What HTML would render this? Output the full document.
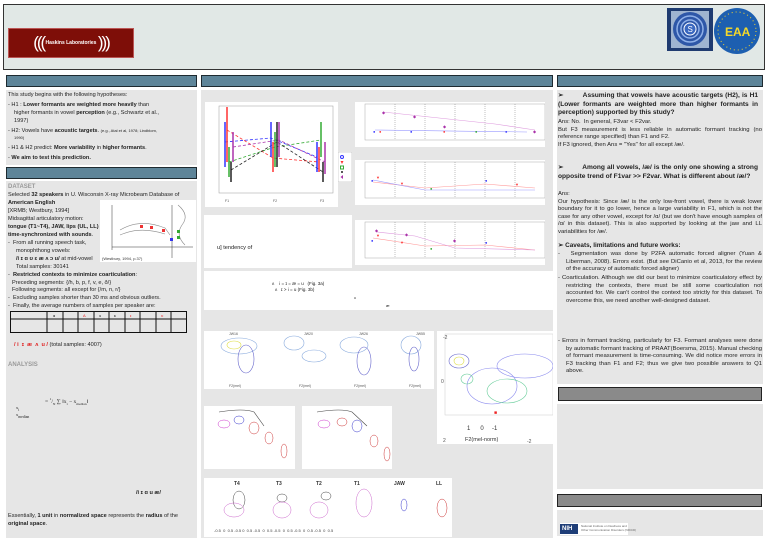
<!DOCTYPE html>
<html><head><meta charset="utf-8"><style>
*{margin:0;padding:0;box-sizing:border-box}
body{width:768px;height:541px;background:#fff;position:relative;overflow:hidden;font-family:"Liberation Sans",sans-serif;color:#222}
.a{position:absolute}
.bar{position:absolute;background:#5e8599;border:1.5px solid #1e2a30}
.gbar{position:absolute;background:#8a8a8a;border:1.5px solid #222}
.gray{position:absolute;background:#e6e6e6}
.w{position:absolute;background:#fff}
.t{position:absolute;font-size:5.6px;line-height:8px;white-space:nowrap}
b{font-weight:bold}
.r{color:#e02020}
.rt{position:absolute;font-family:"Liberation Sans",sans-serif;font-size:6.3px;line-height:8.3px;text-align:justify;width:200px}
.rs{font-size:5.9px;line-height:7.5px;width:204px}
</style></head><body>
<div class="a" style="left:3px;top:4px;width:762px;height:66px;background:#e1e8e6;border:1.5px solid #333"></div>
<div class="a" style="left:8px;top:28px;width:126px;height:30px;background:#7e0e08;border:1px solid #b55;color:#fff;font-size:5px;font-weight:bold;display:flex;align-items:center;justify-content:center">
<span style="font-size:17px;font-weight:normal;letter-spacing:-2px">(((</span>&nbsp;Haskins Laboratories&nbsp;<span style="font-size:17px;font-weight:normal;letter-spacing:-2px">)))</span></div>
<svg class="a" style="left:667px;top:8px" width="46" height="43"><rect width="46" height="43" fill="#1f3b70"/><rect x="4" y="3" width="38" height="37" fill="#9fb4d0"/><circle cx="23" cy="21" r="17" fill="#2e57a8"/><circle cx="23" cy="21" r="13" fill="none" stroke="#8fb0e8" stroke-width="1.5"/><circle cx="23" cy="21" r="9" fill="none" stroke="#8fb0e8" stroke-width="1.5"/><circle cx="23" cy="21" r="6" fill="#3a68c0" stroke="#fff" stroke-width="1"/><text x="20.5" y="24" font-size="8" fill="#fff" font-family="Liberation Sans">S</text></svg>
<svg class="a" style="left:713px;top:7px" width="48" height="48"><circle cx="24" cy="24" r="23" fill="#1d5fb0"/><circle cx="24" cy="24" r="19" fill="none" stroke="#f0d030" stroke-width="1" stroke-dasharray="1 3"/><text x="12" y="29" font-size="12" font-weight="bold" fill="#f4d82a" font-family="Liberation Sans">EAA</text></svg>

<div class="bar" style="left:6px;top:75px;width:191px;height:12px"></div>
<div class="bar" style="left:201px;top:75px;width:352px;height:12px"></div>
<div class="bar" style="left:557px;top:75px;width:206px;height:12px"></div>

<div class="gray" style="left:6px;top:90px;width:191px;height:75px"></div>
<div class="t" style="left:8px;top:91px">This study begins with the following hypotheses:</div>
<div class="t" style="left:8px;top:101px">- H1 : <b>Lower formants are weighted more heavily</b> than</div>
<div class="t" style="left:14px;top:109px">higher formants in vowel <b>perception</b> (e.g., Schwartz et al.,</div>
<div class="t" style="left:14px;top:117px">1997)</div>
<div class="t" style="left:8px;top:127px">- H2: Vowels have <b>acoustic targets</b>. <span style="font-size:4px">(e.g., Atal et al, 1978; Lindblom,</span></div>
<div class="t" style="left:14px;top:134px;font-size:4px">1990)</div>
<div class="t" style="left:8px;top:144px">- H1 &amp; H2 predict: <b>More variability</b> in <b>higher formants</b>.</div>
<div class="t" style="left:8px;top:154px">- <b>We aim to test this prediction.</b></div>
<div class="bar" style="left:6px;top:167px;width:191px;height:12px"></div>
<div class="gray" style="left:6px;top:181px;width:191px;height:357px"></div>
<div class="t" style="left:8px;top:183px;color:#999;font-weight:bold;font-size:6px">DATASET</div>
<div class="t" style="left:8px;top:191px">Selected <b>32 speakers</b> in U. Wisconsin X-ray Microbeam Database of</div>
<div class="t" style="left:8px;top:199px"><b>American English</b></div>
<div class="t" style="left:8px;top:207px">[XRMB; Westbury, 1994]</div>
<div class="t" style="left:8px;top:215px">Midsagittal articulatory motion:</div>
<div class="t" style="left:8px;top:223px"><b>tongue (T1~T4), JAW, lips (UL, LL)</b></div>
<div class="t" style="left:8px;top:231px"><b>time-synchronized with sounds</b>.</div>
<div class="t" style="left:8px;top:239px">-&nbsp; From all running speech task,</div>
<div class="t" style="left:16px;top:247px">monophthong vowels:</div>
<div class="t" style="left:16px;top:255px"><b>/i ɪ ɑ ʊ ɛ æ ʌ ɔ u/</b> at mid-vowel</div>
<div class="t" style="left:16px;top:263px">Total samples: 30141</div>
<div class="t" style="left:8px;top:271px">-&nbsp; <b>Restricted contexts to minimize coarticulation</b>:</div>
<div class="t" style="left:12px;top:279px">Preceding segments: {/h, b, p, f, v, e, ð/}</div>
<div class="t" style="left:12px;top:286px">Following segments: all except for {/m, n, r/}</div>
<div class="t" style="left:8px;top:294px">-&nbsp; Excluding samples shorter than 30 ms and obvious outliers.</div>
<div class="t" style="left:8px;top:302px">-&nbsp; Finally, the average numbers of samples per speaker are:</div>
<svg class="a" style="left:100px;top:200px" width="96" height="62"><rect width="96" height="62" fill="#fff"/><line x1="12" y1="47" x2="93" y2="47" stroke="#333" stroke-width=".5"/><line x1="12" y1="5" x2="12" y2="50" stroke="#333" stroke-width=".5"/><line x1="72" y1="5" x2="72" y2="58" stroke="#333" stroke-width=".5"/><path d="M20 30 Q40 18 65 28 L70 35" fill="none" stroke="#888" stroke-width=".6"/><path d="M20 35 Q40 26 65 34" fill="none" stroke="#888" stroke-width=".6"/><path d="M78 5 Q90 15 82 25 Q75 35 85 45" fill="none" stroke="#888" stroke-width=".6"/><rect x="40" y="25" width="3" height="3" fill="#e33"/><rect x="50" y="26" width="3" height="3" fill="#e33"/><rect x="62" y="29" width="3" height="3" fill="#e33"/><rect x="77" y="30" width="3" height="3" fill="#3a3"/><rect x="77" y="36" width="3" height="3" fill="#3a3"/><rect x="70" y="38" width="3" height="3" fill="#33e"/><text x="2" y="60" font-size="4" fill="#333">(Westbury, 1994, p.37)</text></svg>
<svg class="a" style="left:10px;top:311px" width="177" height="22"><g fill="none" stroke="#111" stroke-width="1"><rect x=".5" y=".5" width="176" height="21"/><line x1=".5" y1="8" x2="176" y2="8"/><line x1="37" y1="0" x2="37" y2="22"/><line x1="53" y1="0" x2="53" y2="22"/><line x1="68" y1="0" x2="68" y2="22"/><line x1="84" y1="0" x2="84" y2="22"/><line x1="99" y1="0" x2="99" y2="22"/><line x1="115" y1="0" x2="115" y2="22"/><line x1="130" y1="0" x2="130" y2="22"/><line x1="146" y1="0" x2="146" y2="22"/><line x1="161" y1="0" x2="161" y2="22"/></g><g font-size="4" font-family="Liberation Sans"><text x="43" y="6">ɑ</text><text x="73" y="6" fill="#e22">A</text><text x="89" y="6">ɔ</text><text x="104" y="6">ɛ</text><text x="120" y="6" fill="#e22">ɪ</text><text x="151" y="6" fill="#e22">ʊ</text></g></svg>
<div class="t" style="left:14px;top:341px"><span class="r" style="font-weight:bold">/ i &nbsp;ɪ &nbsp;æ &nbsp;ʌ &nbsp;u /</span> (total samples: 4007)</div>
<div class="t" style="left:8px;top:361px;color:#999;font-weight:bold;font-size:6px">ANALYSIS</div>
<div class="t" style="left:45px;top:395px;font-family:'Liberation Serif',serif">= <sup style="font-size:3.5px">1</sup>/<sub style="font-size:3.5px">N</sub> ∑ ‖x<sub style="font-size:3.5px">i</sub> − x<sub style="font-size:3.5px">median</sub>‖</div>
<div class="t" style="left:16px;top:404px;font-family:'Liberation Serif',serif;font-size:4.5px">x<sub>i</sub></div>
<div class="t" style="left:16px;top:411px;font-family:'Liberation Serif',serif;font-size:4.5px">x<sub>median</sub></div>
<div class="t" style="left:136px;top:489px;font-weight:bold">/i ɪ ɑ u æ/</div>
<div class="t" style="left:8px;top:512px">Essentially, <b>1 unit</b> in <b>normalized space</b> represents the <b>radius</b> of the</div>
<div class="t" style="left:8px;top:520px"><b>original space</b>.</div>

<div class="gray" style="left:201px;top:90px;width:352px;height:448px"></div>
<svg class="a" style="left:205px;top:102px" width="133" height="105"><rect width="133" height="105" fill="#fff"/><rect x="14" y="4" width="114" height="87" fill="none" stroke="#999" stroke-width=".5"/><g font-size="3.5" fill="#555"><text x="20" y="100">F1</text><text x="68" y="100">F2</text><text x="115" y="100">F3</text></g>
<g stroke-dasharray="3 2" stroke-width=".8" fill="none"><path d="M20 40 L66 36 L112 55" stroke="#33f"/><path d="M22 28 L68 56 L114 60" stroke="#f33"/><path d="M24 60 L70 45 L116 38" stroke="#3a3"/><path d="M26 68 L72 40 L118 70" stroke="#222"/><path d="M28 45 L74 38 L120 60" stroke="#a3a"/></g>
<g stroke-width="1.5"><line x1="20" y1="20" x2="20" y2="65" stroke="#33f"/><line x1="22" y1="5" x2="22" y2="60" stroke="#f33"/><line x1="24" y1="45" x2="24" y2="75" stroke="#3a3"/><line x1="26" y1="60" x2="26" y2="80" stroke="#222"/><line x1="28" y1="30" x2="28" y2="60" stroke="#a3a"/><line x1="66" y1="20" x2="66" y2="55" stroke="#33f"/><line x1="68" y1="40" x2="68" y2="70" stroke="#f33"/><line x1="70" y1="30" x2="70" y2="65" stroke="#3a3"/><line x1="72" y1="20" x2="72" y2="65" stroke="#222"/><line x1="74" y1="20" x2="74" y2="55" stroke="#a3a"/><line x1="112" y1="40" x2="112" y2="70" stroke="#33f"/><line x1="114" y1="45" x2="114" y2="70" stroke="#f33"/><line x1="116" y1="20" x2="116" y2="55" stroke="#3a3"/><line x1="118" y1="60" x2="118" y2="80" stroke="#222"/><line x1="120" y1="40" x2="120" y2="72" stroke="#a3a"/></g></svg>
<svg class="a" style="left:338px;top:152px" width="14" height="30"><rect width="14" height="30" fill="#fff" stroke="#aaa" stroke-width=".5"/><circle cx="4" cy="5" r="1.5" fill="none" stroke="#33f"/><path d="M2.5 9 L5.5 9 L4 12Z" fill="#f33"/><rect x="2.5" y="14" width="3" height="3" fill="none" stroke="#3a3"/><circle cx="4" cy="20" r="1" fill="#222"/><path d="M5 23 L2.5 25 L5 27Z" fill="#a3a"/></svg>
<svg class="a" style="left:355px;top:102px" width="190" height="165">
<g id="p"><rect width="190" height="45" fill="#fff"/><rect x="10" y="2" width="180" height="36" fill="none" stroke="#aaa" stroke-width=".5"/><g stroke="#666" stroke-width=".4" stroke-dasharray="1 1"><line x1="40" y1="2" x2="40" y2="38"/><line x1="70" y1="2" x2="70" y2="38"/><line x1="100" y1="2" x2="100" y2="38"/><line x1="130" y1="2" x2="130" y2="38"/><line x1="160" y1="2" x2="160" y2="38"/></g></g>
<g fill="none" stroke-width=".6"><path d="M20 28 L172 30" stroke="#99f"/><path d="M28 10 L140 22 L180 28" stroke="#d9d"/></g>
<g font-size="4"><text x="18" y="31" fill="#33f">●</text><text x="24" y="31" fill="#f33">●</text><text x="27" y="12" fill="#a3a">◆</text><text x="55" y="31" fill="#33f">●</text><text x="58" y="16" fill="#a3a">◆</text><text x="88" y="31" fill="#f33">●</text><text x="88" y="26" fill="#a3a">◆</text><text x="120" y="31" fill="#3a3">●</text><text x="150" y="31" fill="#33f">●</text><text x="178" y="31" fill="#a3a">◆</text></g>
<g transform="translate(0,58)"><use href="#p"/><path d="M18 22 L70 28 L130 24 L180 28" fill="none" stroke="#f99" stroke-width=".6"/><path d="M18 20 L70 30 L180 30" fill="none" stroke="#99f" stroke-width=".6"/><g font-size="4"><text x="16" y="22" fill="#33f">●</text><text x="21" y="19" fill="#f33">▼</text><text x="45" y="25" fill="#f33">▼</text><text x="75" y="30" fill="#3a3">●</text><text x="130" y="22" fill="#33f">●</text><text x="160" y="26" fill="#f33">▼</text></g></g>
<g transform="translate(0,118)"><use href="#p"/><path d="M18 18 L70 26 L130 25 L180 30" fill="none" stroke="#f99" stroke-width=".6"/><path d="M22 12 L60 16 L100 28 L180 30" fill="none" stroke="#d9d" stroke-width=".6"/><g font-size="4"><text x="16" y="22" fill="#33f">●</text><text x="21" y="17" fill="#f33">▼</text><text x="20" y="12" fill="#a3a">◆</text><text x="50" y="16" fill="#a3a">◆</text><text x="45" y="24" fill="#f33">▼</text><text x="75" y="30" fill="#3a3">●</text><text x="98" y="22" fill="#a3a">◆</text><text x="130" y="24" fill="#33f">●</text></g></g>
</svg>
<div class="w" style="left:204px;top:215px;width:148px;height:53px"></div>
<div class="t" style="left:217px;top:244px">u] tendency of</div>
<div class="w" style="left:204px;top:271px;width:349px;height:39px"></div>
<div class="t" style="left:272px;top:280px;font-size:4.5px">ʌ &nbsp;&nbsp; i = ɪ = æ = u &nbsp;&nbsp;(Fig. 3a)</div>
<div class="t" style="left:275px;top:286px;font-size:4.5px">ʌ &nbsp; ɪ &gt; i = u (Fig. 3b)</div>
<div class="t" style="left:354px;top:294px;font-size:4px">ʌ</div>
<div class="t" style="left:386px;top:302px;font-size:4px">æ</div>
<svg class="a" style="left:204px;top:331px" width="230" height="58"><rect width="230" height="58" fill="#fff"/>
<g fill="none" stroke-width=".6"><ellipse cx="35" cy="15" rx="18" ry="8" stroke="#8ad"/><ellipse cx="30" cy="14" rx="7" ry="4" stroke="#dd4"/><ellipse cx="42" cy="28" rx="8" ry="14" stroke="#66c"/><ellipse cx="90" cy="12" rx="10" ry="7" stroke="#8ad"/><ellipse cx="110" cy="25" rx="12" ry="6" stroke="#8ad"/><ellipse cx="150" cy="14" rx="14" ry="8" stroke="#8ad"/><ellipse cx="160" cy="30" rx="7" ry="14" stroke="#66c"/><ellipse cx="207" cy="14" rx="10" ry="9" stroke="#8ad"/><ellipse cx="210" cy="28" rx="5" ry="12" stroke="#66c"/></g>
<g font-size="3.5" fill="#555"><text x="25" y="4">JW16</text><text x="100" y="4">JW20</text><text x="155" y="4">JW26</text><text x="212" y="4">JW55</text><text x="25" y="56">F2(mel)</text><text x="95" y="56">F2(mel)</text><text x="150" y="56">F2(mel)</text><text x="205" y="56">F2(mel)</text></g></svg>
<svg class="a" style="left:437px;top:331px" width="116" height="113"><rect width="116" height="113" fill="#fff"/><rect x="8" y="3" width="108" height="81" fill="none" stroke="#ccc" stroke-width=".5"/>
<g fill="none" stroke-width=".6"><ellipse cx="22" cy="30" rx="10" ry="7" stroke="#66c"/><ellipse cx="22" cy="30" rx="5" ry="4" stroke="#dd4"/><ellipse cx="88" cy="35" rx="28" ry="12" stroke="#88e"/><ellipse cx="55" cy="55" rx="25" ry="18" stroke="#88e"/><ellipse cx="70" cy="60" rx="20" ry="12" stroke="#6c9"/><ellipse cx="30" cy="48" rx="6" ry="5" stroke="#6c9"/></g>
<g font-size="5"><text x="6" y="8" fill="#555">-2</text><text x="4" y="52" fill="#555">0</text><text x="6" y="111" fill="#555">2</text><text x="90" y="112" fill="#555">-2</text><text x="57" y="83" fill="#e22">■</text></g>
<text x="30" y="99" font-size="6" fill="#333">1 &nbsp;&nbsp;&nbsp;&nbsp;&nbsp;0 &nbsp;&nbsp;&nbsp;&nbsp;-1</text><text x="28" y="110" font-size="5.5" fill="#333">F2(mel-norm)</text></svg>
<svg class="a" style="left:204px;top:406px" width="91" height="63"><rect width="91" height="63" fill="#fff"/><path d="M15 6 Q40 2 50 6 L60 20" fill="none" stroke="#444" stroke-width=".6"/><g fill="none" stroke-width=".5"><ellipse cx="20" cy="18" rx="6" ry="4" stroke="#c3c"/><ellipse cx="35" cy="14" rx="5" ry="4" stroke="#33c"/><ellipse cx="50" cy="22" rx="5" ry="6" stroke="#c33"/><ellipse cx="65" cy="32" rx="4" ry="6" stroke="#c33"/><ellipse cx="80" cy="45" rx="3" ry="7" stroke="#c33"/></g></svg>
<svg class="a" style="left:302px;top:406px" width="90" height="63"><rect width="90" height="63" fill="#fff"/><path d="M15 6 Q40 2 50 6 L65 20" fill="none" stroke="#444" stroke-width=".6"/><g fill="none" stroke-width=".5"><ellipse cx="22" cy="18" rx="6" ry="4" stroke="#c3c"/><ellipse cx="40" cy="16" rx="5" ry="4" stroke="#c33"/><ellipse cx="55" cy="20" rx="5" ry="6" stroke="#33c"/><ellipse cx="72" cy="35" rx="4" ry="6" stroke="#c33"/><ellipse cx="85" cy="48" rx="3" ry="7" stroke="#c33"/></g></svg>
<svg class="a" style="left:204px;top:478px" width="248" height="59"><rect width="248" height="59" fill="#fff"/>
<g font-size="5" font-weight="bold" fill="#333"><text x="30" y="7">T4</text><text x="72" y="7">T3</text><text x="112" y="7">T2</text><text x="150" y="7">T1</text><text x="190" y="7">JAW</text><text x="232" y="7">LL</text></g>
<g fill="none" stroke-width=".5"><ellipse cx="35" cy="22" rx="6" ry="9" stroke="#444"/><ellipse cx="30" cy="32" rx="10" ry="7" stroke="#c6c"/><ellipse cx="78" cy="20" rx="5" ry="4" stroke="#444"/><ellipse cx="78" cy="32" rx="9" ry="8" stroke="#c6c"/><ellipse cx="122" cy="18" rx="5" ry="4" stroke="#444"/><ellipse cx="115" cy="32" rx="9" ry="8" stroke="#c6c"/><ellipse cx="160" cy="25" rx="8" ry="14" stroke="#c6c"/><ellipse cx="200" cy="27" rx="3" ry="6" stroke="#33c"/><ellipse cx="238" cy="30" rx="5" ry="9" stroke="#c33"/></g>
<g font-size="4" fill="#444"><text x="10" y="54">-0.5 &nbsp;0 &nbsp;0.5 -0.5 0 &nbsp;0.5 -0.5 &nbsp;0 &nbsp;0.5 -0.5 &nbsp;0 &nbsp;0.5 -0.5 &nbsp;0 &nbsp;0.5 -0.5 &nbsp;0 &nbsp;0.5</text></g></svg>

<div class="gray" style="left:557px;top:90px;width:206px;height:294px"></div>
<div class="rt" style="left:558px;top:92px;font-weight:bold;font-size:6.6px;line-height:8.6px">➢ &nbsp;&nbsp;&nbsp;&nbsp;&nbsp;&nbsp;&nbsp;&nbsp;Assuming that vowels have acoustic targets (H2), is H1 (Lower formants are weighted more than higher formants in perception) supported by this study?</div>
<div class="rt rs" style="left:558px;top:119px">Ans: No. &nbsp;In general, F3var &lt; F2var.<br>But F3 measurement is less reliable in automatic formant tracking (no reference range specified) than F1 and F2.<br>If F3 ignored, then Ans = "Yes" for all except /æ/.</div>
<div class="rt" style="left:558px;top:164px;font-weight:bold;font-size:6.6px;line-height:8.6px">➢ &nbsp;&nbsp;&nbsp;&nbsp;&nbsp;&nbsp;&nbsp;&nbsp;Among all vowels, /æ/ is the only one showing a strong opposite trend of F1var &gt;&gt; F2var. What is different about /æ/?</div>
<div class="rt rs" style="left:558px;top:191px">Ans:<br>Our hypothesis: Since /æ/ is the only low-front vowel, there is weak lower boundary for it to go lower, hence a large variability in F1, which is not the case for any other vowel, except for /ɑ/ (but we don't have enough samples of /ɑ/ in this dataset). This is also supported by looking at the jaw and LL variabilities for /æ/.</div>
<div class="rt" style="left:558px;top:242px;font-weight:bold;font-size:6.4px">➢ Caveats, limitations and future works:</div>
<div class="rt rs" style="left:558px;top:251px;padding-left:8px;text-indent:-8px">- &nbsp;&nbsp;Segmentation was done by P2FA automatic forced aligner (Yuan &amp; Liberman, 2008). Errors exist. (But see DiCanio et al, 2013, for the review of the accuracy of automatic forced aligner)</div>
<div class="rt rs" style="left:558px;top:275px;padding-left:8px;text-indent:-8px">- Coarticulation. Although we did our best to minimize coarticulatory effect by restricting the contexts, there must be still some coarticulation not accounted for. We can't control the context too strictly for this dataset. To overcome this, we need another well-designed dataset.</div>
<div class="rt rs" style="left:558px;top:338px;padding-left:8px;text-indent:-8px">- Errors in formant tracking, particularly for F3. Formant analyses were done by automatic formant tracking of PRAAT(Boersma, 2015). Manual checking of formant measurement is time-consuming. We did notice more errors in F3 tracking than F1 and F2; thus we give two possible answers to Q1 above.</div>
<div class="gbar" style="left:558px;top:387px;width:204px;height:14px"></div>
<div class="gray" style="left:557px;top:404px;width:206px;height:85px"></div>
<div class="gbar" style="left:557px;top:494px;width:205px;height:13px"></div>
<div class="gray" style="left:557px;top:510px;width:206px;height:26px"></div>
<div class="a" style="left:560px;top:523px;width:68px;height:12px;background:#fff"></div>
<div class="a" style="left:560px;top:524px;width:18px;height:10px;background:#1f3e78;color:#fff;font-size:6px;font-weight:bold;line-height:10px;padding-left:2px">NIH</div>
<div class="a" style="left:581px;top:524px;font-size:3px;line-height:4px;color:#666">National Institute on Deafness and<br>Other Communication Disorders (NIDCD)</div>
</body></html>
